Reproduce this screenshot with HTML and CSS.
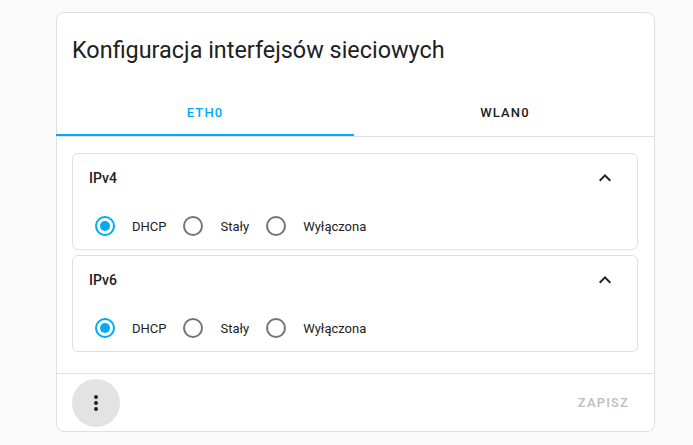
FILE: index.html
```html
<!DOCTYPE html>
<html lang="pl">
<head>
<meta charset="utf-8">
<link rel="stylesheet" href="styles.css">
</head>
<body>
<div class="card">
  <h1 class="title">Konfiguracja interfejsów sieciowych</h1>
  <div class="tabs">
    <div class="tab active">ETH0</div>
    <div class="tab">WLAN0</div>
  </div>
  <div class="content">
    <div class="panel">
      <div class="panel-head">
        <span class="panel-title">IPv4</span>
        <svg class="chev" viewBox="0 0 24 24" width="24" height="24"><path d="M7.41 15.41 12 10.83l4.59 4.58L18 14l-6-6-6 6z"/></svg>
      </div>
      <div class="radios">
        <label class="field"><span class="radio checked"></span><span class="lbl">DHCP</span></label>
        <label class="field"><span class="radio"></span><span class="lbl">Stały</span></label>
        <label class="field"><span class="radio"></span><span class="lbl">Wyłączona</span></label>
      </div>
    </div>
    <div class="panel">
      <div class="panel-head">
        <span class="panel-title">IPv6</span>
        <svg class="chev" viewBox="0 0 24 24" width="24" height="24"><path d="M7.41 15.41 12 10.83l4.59 4.58L18 14l-6-6-6 6z"/></svg>
      </div>
      <div class="radios">
        <label class="field"><span class="radio checked"></span><span class="lbl">DHCP</span></label>
        <label class="field"><span class="radio"></span><span class="lbl">Stały</span></label>
        <label class="field"><span class="radio"></span><span class="lbl">Wyłączona</span></label>
      </div>
    </div>
  </div>
  <div class="footer">
    <div class="menu-btn">
      <svg viewBox="0 0 24 24" width="24" height="24"><path d="M12 16a2 2 0 0 1 2 2 2 2 0 0 1-2 2 2 2 0 0 1-2-2 2 2 0 0 1 2-2m0-6a2 2 0 0 1 2 2 2 2 0 0 1-2 2 2 2 0 0 1-2-2 2 2 0 0 1 2-2m0-6a2 2 0 0 1 2 2 2 2 0 0 1-2 2 2 2 0 0 1-2-2 2 2 0 0 1 2-2z"/></svg>
    </div>
    <div class="save">ZAPISZ</div>
  </div>
</div>
</body>
</html>
```
FILE: styles.css
```css
html, body {
  margin: 0;
  padding: 0;
  background: #fafafa;
  font-family: Roboto, "Liberation Sans", sans-serif;
  color: #212121;
}
body {
  padding: 12px 0 0 56px;
}
.card {
  width: 597px;
  height: 418px;
  background: #fff;
  border: 1px solid #e0e0e0;
  border-radius: 8px;
  display: flex;
  flex-direction: column;
  box-sizing: content-box;
}
.title {
  margin: 0;
  height: 75px;
  padding: 23px 0 0 15px;
  box-sizing: border-box;
  font-size: 23.4px;
  font-weight: 400;
  line-height: 28px;
  color: #212121;
}
.tabs {
  display: flex;
  height: 48px;
  border-bottom: 1px solid #e0e0e0;
}
.tab {
  flex: 1;
  display: flex;
  align-items: center;
  justify-content: center;
  font-size: 13px;
  font-weight: 500;
  letter-spacing: 1.15px;
  color: #212121;
  box-sizing: border-box;
  padding-top: 1px;
}
.tab.active {
  color: #03a9f4;
  border-bottom: 2px solid #03a9f4;
  padding-top: 3px;
  margin-right: 2px;
  margin-left: -1px;
}
.content {
  padding: 16px 16px 0 15px;
  display: flex;
  flex-direction: column;
  gap: 5px;
  height: 236px;
  box-sizing: border-box;
}
.panel {
  border: 1px solid #e0e0e0;
  border-radius: 6px;
  height: 97px;
  box-sizing: border-box;
}
.panel-head {
  height: 48px;
  display: flex;
  align-items: center;
  justify-content: space-between;
  padding: 0 20px 0 16px;
}
.panel-title {
  font-size: 14px;
  font-weight: 500;
  color: #212121;
}
.chev {
  fill: #212121;
}
.radios {
  display: flex;
  align-items: center;
  height: 48px;
  padding-left: 12px;
}
.field {
  display: flex;
  align-items: center;
  font-size: 13px;
  color: #212121;
}
.radio {
  width: 40px;
  height: 40px;
  display: flex;
  align-items: center;
  justify-content: center;
  position: relative;
}
.radio::before {
  content: "";
  width: 16px;
  height: 16px;
  border: 2px solid #757575;
  border-radius: 50%;
}
.radio.checked::before {
  border-color: #03a9f4;
}
.radio.checked::after {
  content: "";
  position: absolute;
  left: 15px;
  top: 15px;
  width: 10px;
  height: 10px;
  border-radius: 50%;
  background: #03a9f4;
}
.lbl {
  margin: 0 7px 0 7px;
}
.footer {
  border-top: 1px solid #e0e0e0;
  flex: 1;
  display: flex;
  align-items: center;
  justify-content: space-between;
  padding: 0 25px 0 15px;
}
.menu-btn {
  width: 48px;
  height: 48px;
  border-radius: 50%;
  background: #e3e3e3;
  display: flex;
  align-items: center;
  justify-content: center;
}
.menu-btn svg {
  fill: #212121;
}
.save {
  font-size: 13px;
  font-weight: 500;
  letter-spacing: 1.15px;
  color: #bdbdbd;
}
```
